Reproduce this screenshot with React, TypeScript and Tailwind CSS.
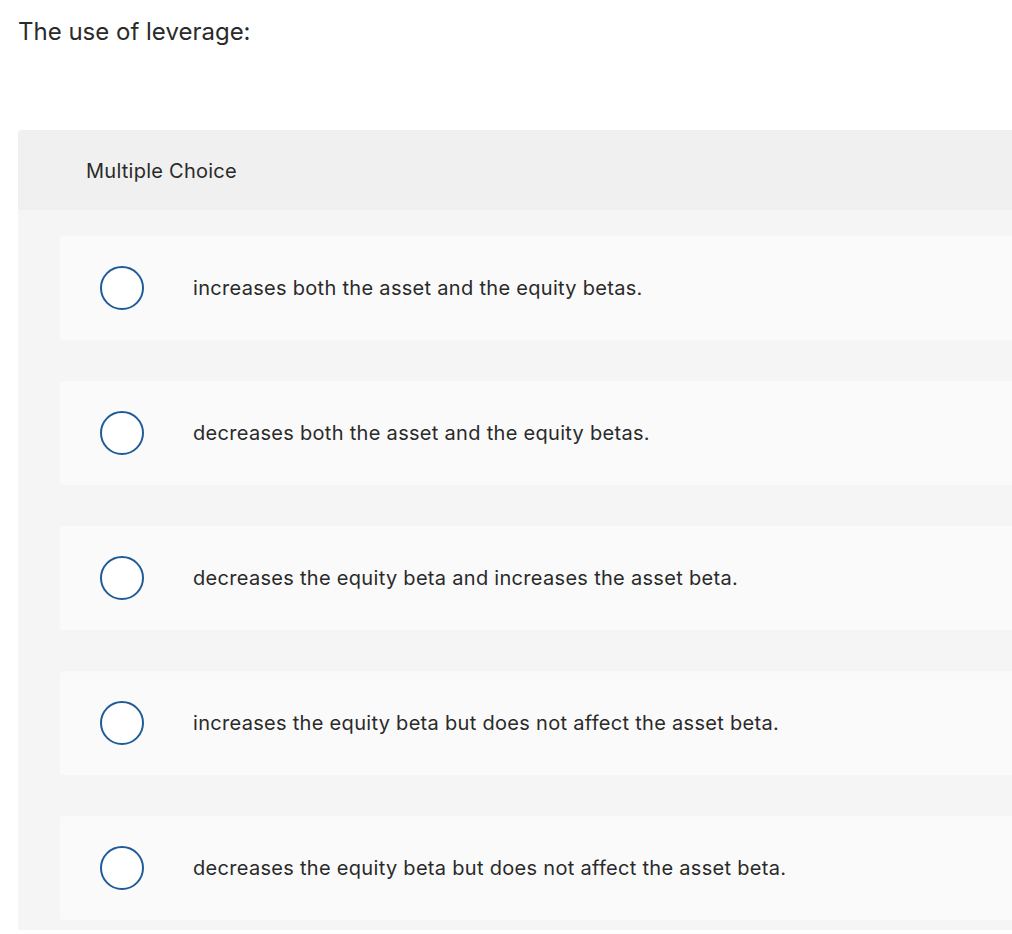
import React from "react";

const OPTIONS = [
  "increases both the asset and the equity betas.",
  "decreases both the asset and the equity betas.",
  "decreases the equity beta and increases the asset beta.",
  "increases the equity beta but does not affect the asset beta.",
  "decreases the equity beta but does not affect the asset beta.",
];

export default function App() {
  return (
    <div className="min-h-[934px] bg-white text-[#333] font-['Inter','Open_Sans',sans-serif]">
      <div className="pl-[18px] pt-[16px] h-[130px]">
        <p className="text-[24px] leading-[32px] text-[#2a2a2a]">The use of leverage:</p>
      </div>
      <div className="ml-[18px] rounded-tl-[4px] overflow-hidden">
        <div className="h-[80px] bg-[#f0f0f0] flex items-center pl-[68px] pt-[1px]">
          <span className="text-[20px] tracking-[0.25px] text-[#2a2a2a]">Multiple Choice</span>
        </div>
        <div className="bg-[#f5f5f5] pl-[42px] pt-[26px] pb-[10px] flex flex-col gap-[41px]">
          {OPTIONS.map((o) => (
            <label
              key={o}
              className="h-[104px] bg-[#fafafa] rounded-l-[4px] flex items-center pl-[40px] cursor-pointer"
            >
              <span className="w-[44px] h-[44px] rounded-full border-2 border-[#1f5b98] bg-white shrink-0" />
              <span className="ml-[49px] text-[20px] tracking-[0.3px] text-[#2a2a2a]">{o}</span>
            </label>
          ))}
        </div>
      </div>
    </div>
  );
}
